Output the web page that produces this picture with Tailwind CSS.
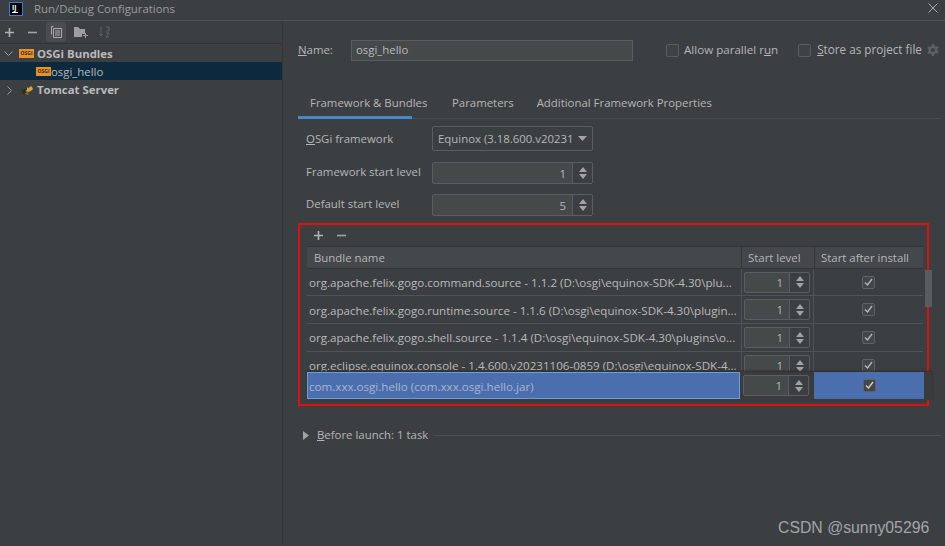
<!DOCTYPE html>
<html lang="en">
<head>
  <meta charset="UTF-8" />
  <title>Run/Debug Configurations</title>
  <script src="https://cdn.jsdelivr.net/npm/@tailwindcss/browser@4"></script>
</head>
<body class="bg-[#3c3f41] text-[#b4b6b8] font-['Open_Sans','Noto_Sans',sans-serif] text-[11.4px] whitespace-nowrap w-[945px] h-[546px] overflow-hidden relative flex flex-col">

  <!-- Title bar -->
  <div class="h-[21px] shrink-0 flex items-center border-b border-[#505354] relative">
    <div class="ml-[9px] -mt-[2px] w-[14px] h-[14px] bg-black border border-[#2f7fd8] text-white text-[7px] font-bold leading-[7px] pl-[2px] pt-[1px]">IJ<div class="w-[6px] h-[1px] bg-white mt-[1px]"></div></div>
    <span class="ml-[11px] -mt-[2px] text-[#9a9c9e]">Run/Debug Configurations</span>
    <svg class="absolute left-[928px] top-[3px]" width="10" height="10" viewBox="0 0 10 10" fill="none" stroke="#a9abad"><path d="M.5.5l9 9M9.5.5l-9 9"/></svg>
  </div>

  <div class="flex flex-1 min-h-0">
    <!-- Left tree -->
    <div class="w-[283px] shrink-0 border-r border-[#343638] flex flex-col">
      <div class="h-[23px] flex items-center border-b border-[#323436] relative">
        <svg class="ml-[4px]" width="11" height="11" viewBox="0 0 11 11" stroke="#b0b2b4" stroke-width="1.6"><path d="M5.5 1v9M1 5.5h9"/></svg>
        <svg class="ml-[12px]" width="11" height="11" viewBox="0 0 11 11" stroke="#a0a2a4" stroke-width="1.6"><path d="M1 5.5h9"/></svg>
        <div class="ml-[8px] w-[20px] h-[20px] bg-[#4a4d4f] rounded-[3px] flex items-center justify-center">
          <svg width="13" height="14" viewBox="0 0 13 14" fill="none" stroke="#a8aaac"><path d="M3.5 1.5H1.5v8M3.5 3.5h8v9h-8zM5 6h5M5 8h5M5 10h5"/></svg>
        </div>
        <svg class="ml-[8px]" width="14" height="13" viewBox="0 0 14 13" fill="#9c9ea0"><path d="M0 1h4l2 2h5v5H8v3H0z"/><path d="M9 9h2V7h1v2h2v1h-2v2h-1v-2H9z"/></svg>
        <svg class="ml-[10px]" width="12" height="12" viewBox="0 0 12 12" fill="none" stroke="#5f6264"><path d="M3 1v9M1 8l2 2 2-2M8 1h3v4H8M8 7h3l-3 4h3"/></svg>
      </div>
      <div class="h-[18px] flex items-center font-bold text-[#b8babc]">
        <svg class="ml-[4px]" width="9" height="9" viewBox="0 0 9 9" fill="none" stroke="#9a9c9e"><path d="M.5 2.5l4 4 4-4"/></svg>
        <span class="ml-[6px] w-[15px] h-[9px] bg-[#e8912a] text-[#3a2a10] text-[5px] leading-[9px] text-center font-bold">OSGi</span>
        <span class="ml-[3px] pt-[2px]">OSGi Bundles</span>
      </div>
      <div class="h-[18px] flex items-center bg-[#0d293e] text-[#b8babc]">
        <span class="ml-[36px] w-[15px] h-[9px] bg-[#e8912a] text-[#3a2a10] text-[5px] leading-[9px] text-center font-bold">OSGi</span>
        <span class="pt-[2px]">osgi_hello</span>
      </div>
      <div class="h-[20px] flex items-center font-bold text-[#b8babc]">
        <svg class="ml-[5px]" width="9" height="9" viewBox="0 0 9 9" fill="none" stroke="#9a9c9e"><path d="M2.5.5l4 4-4 4"/></svg>
        <svg class="ml-[7px]" width="12" height="9" viewBox="0 0 12 9"><path d="M0 3l2 1 2-1 3 1 1 3-2 2H3L2 7z" fill="#26282a"/><path d="M6 1l1 1 2-1 1-1 1 1 1 2-2 2-3 1-3-1 2-1z" fill="#d4a53a"/><path d="M3 8l3-2 2 1-1 2z" fill="#8a6d2c"/></svg>
        <span class="ml-[4px]">Tomcat Server</span>
      </div>
    </div>

    <!-- Right pane -->
    <div class="flex-1 min-w-0 flex flex-col pl-[15px] pr-[4px]">
      <!-- Name row -->
      <div class="flex items-center h-[22px] mt-[18px]">
        <span class="w-[53px] shrink-0"><u>N</u>ame:</span>
        <div class="w-[282px] shrink-0 h-[21px] bg-[#45494a] border border-[#5b5e60] flex items-center pl-[4px] text-[#b8babc]">osgi_hello</div>
        <div class="ml-[33px] w-[13px] h-[13px] shrink-0 border border-[#5a5d5f] bg-[#3f4244] rounded-[2px]"></div>
        <span class="ml-[5px] text-[11.6px]">Allow parallel r<u>u</u>n</span>
        <div class="ml-[20px] w-[13px] h-[13px] shrink-0 border border-[#5a5d5f] bg-[#3f4244] rounded-[2px]"></div>
        <span class="ml-[6px] text-[11.7px]"><u>S</u>tore as project file</span>
        <svg class="ml-[5px] shrink-0" width="12" height="13" viewBox="0 0 12 13" fill="#5e6163"><path d="M5 0h2l.4 1.8 1.6.8 1.7-.7 1 1.7-1.3 1.2v1.9l1.3 1.2-1 1.7-1.7-.7-1.6.8L7 12H5l-.4-1.8-1.6-.8-1.7.7-1-1.7 1.3-1.2V5.3L.3 4.1l1-1.7 1.7.7 1.6-.8zM6 4a2 2 0 100 4 2 2 0 000-4z"/></svg>
      </div>

      <!-- Tabs -->
      <div class="flex h-[38px] mt-[20px] border-b border-[#4a4d4f] items-end">
        <div class="w-[114px] h-[30px] border-b-[3px] border-[#4a88c7] -mb-[1px] pl-[12px] pt-[5px]">Framework &amp; Bundles</div>
        <div class="h-[30px] ml-[40px] -mb-[1px] pt-[5px]">Parameters</div>
        <div class="h-[30px] ml-[23px] -mb-[1px] pt-[5px]">Additional Framework Properties</div>
      </div>

      <!-- Framework form -->
      <div class="flex items-center mt-[7px] pl-[8px] h-[25px]">
        <span class="w-[126px] shrink-0"><u>O</u>SGi framework</span>
        <div class="w-[161px] h-[25px] border border-[#5b5e60] rounded-[2px] flex items-center justify-between pl-[5px] pr-[5px]">
          <span>Equinox (3.18.600.v20231</span>
          <svg width="9" height="5" viewBox="0 0 9 5" fill="#a0a2a4"><path d="M0 0h9L4.5 5z"/></svg>
        </div>
      </div>
      <div class="flex items-center mt-[10px] pl-[8px] h-[23px]">
        <span class="w-[126px] shrink-0 -mt-[2px]">Framework start level</span>
        <div class="w-[161px] h-[22px] border border-[#5b5e60] rounded-[2px] flex bg-[#45494a]">
          <span class="flex-1 text-right pr-[6px] leading-[21px]">1</span>
          <div class="w-[20px] border-l border-[#5b5e60] bg-[#3c3f41] flex flex-col items-center justify-center gap-[2px]">
            <svg width="8" height="5" viewBox="0 0 8 5" fill="#a0a2a4"><path d="M4 0l4 5H0z"/></svg>
            <svg width="8" height="5" viewBox="0 0 8 5" fill="#a0a2a4"><path d="M0 0h8L4 5z"/></svg>
          </div>
        </div>
      </div>
      <div class="flex items-center mt-[9px] pl-[8px] h-[23px]">
        <span class="w-[126px] shrink-0 -mt-[2px]">Default start level</span>
        <div class="w-[161px] h-[22px] border border-[#5b5e60] rounded-[2px] flex bg-[#45494a]">
          <span class="flex-1 text-right pr-[6px] leading-[21px]">5</span>
          <div class="w-[20px] border-l border-[#5b5e60] bg-[#3c3f41] flex flex-col items-center justify-center gap-[2px]">
            <svg width="8" height="5" viewBox="0 0 8 5" fill="#a0a2a4"><path d="M4 0l4 5H0z"/></svg>
            <svg width="8" height="5" viewBox="0 0 8 5" fill="#a0a2a4"><path d="M0 0h8L4 5z"/></svg>
          </div>
        </div>
      </div>

      <!-- Bundle table, framed in red -->
      <div class="w-[631px] h-[183px] mt-[7px] border-[2px] border-[#e01010] pl-[7px] flex flex-col">
        <div class="h-[21px] flex items-center shrink-0">
          <svg class="ml-[6px]" width="11" height="11" viewBox="0 0 11 11" stroke="#b0b2b4" stroke-width="1.6"><path d="M5.5 1v9M1 5.5h9"/></svg>
          <svg class="ml-[12px]" width="11" height="11" viewBox="0 0 11 11" stroke="#a0a2a4" stroke-width="1.6"><path d="M1 5.5h9"/></svg>
        </div>
        <div class="w-[616px] h-[23px] shrink-0 flex bg-[#45484a] border-y border-[#323436] items-center">
          <span class="w-[434px] pl-[7px]">Bundle name</span>
          <span class="w-[73px] pl-[6px] border-l border-[#323436] leading-[22px]">Start level</span>
          <span class="pl-[6px] border-l border-[#323436] leading-[22px]">Start after install</span>
        </div>
        <div class="h-[27px] w-[616px] shrink-0 flex border-b border-[#515456] items-center overflow-hidden">
          <span class="w-[434px] pl-[2px] pt-[2px] text-[11.6px] text-[#b8babc]">org.apache.felix.gogo.command.source - 1.1.2 (D:\osgi\equinox-SDK-4.30\plu...</span>
          <div class="w-[73px] self-stretch border-x border-[#515456] flex items-center pl-[2px]"><div class="w-[66px] h-[21px] border border-[#5b5e60] rounded-[2px] flex bg-[#45494a]"><span class="flex-1 text-right pr-[6px] leading-[20px]">1</span><div class="w-[20px] border-l border-[#5b5e60] bg-[#3c3f41] flex flex-col items-center justify-center gap-[2px]"><svg width="8" height="5" viewBox="0 0 8 5" fill="#a0a2a4"><path d="M4 0l4 5H0z"/></svg><svg width="8" height="5" viewBox="0 0 8 5" fill="#a0a2a4"><path d="M0 0h8L4 5z"/></svg></div></div></div>
          <div class="flex-1 flex justify-center"><div class="w-[13px] h-[13px] border border-[#606365] bg-[#43474a] rounded-[2px] flex items-center justify-center"><svg width="9" height="9" viewBox="0 0 9 9" fill="none" stroke="#b4b6b8" stroke-width="1.4"><path d="M1 4.5l2.5 2.5L8 1"/></svg></div></div>
        </div>
        <div class="h-[28px] w-[616px] shrink-0 flex border-b border-[#515456] items-center overflow-hidden">
          <span class="w-[434px] pl-[2px] pt-[2px] text-[11.6px] text-[#b8babc]">org.apache.felix.gogo.runtime.source - 1.1.6 (D:\osgi\equinox-SDK-4.30\plugin...</span>
          <div class="w-[73px] self-stretch border-x border-[#515456] flex items-center pl-[2px]"><div class="w-[66px] h-[21px] border border-[#5b5e60] rounded-[2px] flex bg-[#45494a]"><span class="flex-1 text-right pr-[6px] leading-[20px]">1</span><div class="w-[20px] border-l border-[#5b5e60] bg-[#3c3f41] flex flex-col items-center justify-center gap-[2px]"><svg width="8" height="5" viewBox="0 0 8 5" fill="#a0a2a4"><path d="M4 0l4 5H0z"/></svg><svg width="8" height="5" viewBox="0 0 8 5" fill="#a0a2a4"><path d="M0 0h8L4 5z"/></svg></div></div></div>
          <div class="flex-1 flex justify-center"><div class="w-[13px] h-[13px] border border-[#606365] bg-[#43474a] rounded-[2px] flex items-center justify-center"><svg width="9" height="9" viewBox="0 0 9 9" fill="none" stroke="#b4b6b8" stroke-width="1.4"><path d="M1 4.5l2.5 2.5L8 1"/></svg></div></div>
        </div>
        <div class="h-[28px] w-[616px] shrink-0 flex border-b border-[#515456] items-center overflow-hidden">
          <span class="w-[434px] pl-[2px] text-[11.6px] text-[#b8babc]">org.apache.felix.gogo.shell.source - 1.1.4 (D:\osgi\equinox-SDK-4.30\plugins\o...</span>
          <div class="w-[73px] self-stretch border-x border-[#515456] flex items-center pl-[2px]"><div class="w-[66px] h-[21px] border border-[#5b5e60] rounded-[2px] flex bg-[#45494a]"><span class="flex-1 text-right pr-[6px] leading-[20px]">1</span><div class="w-[20px] border-l border-[#5b5e60] bg-[#3c3f41] flex flex-col items-center justify-center gap-[2px]"><svg width="8" height="5" viewBox="0 0 8 5" fill="#a0a2a4"><path d="M4 0l4 5H0z"/></svg><svg width="8" height="5" viewBox="0 0 8 5" fill="#a0a2a4"><path d="M0 0h8L4 5z"/></svg></div></div></div>
          <div class="flex-1 flex justify-center"><div class="w-[13px] h-[13px] border border-[#606365] bg-[#43474a] rounded-[2px] flex items-center justify-center"><svg width="9" height="9" viewBox="0 0 9 9" fill="none" stroke="#b4b6b8" stroke-width="1.4"><path d="M1 4.5l2.5 2.5L8 1"/></svg></div></div>
        </div>
        <div class="h-[20px] w-[616px] shrink-0 flex items-start overflow-hidden">
          <span class="w-[434px] pl-[2px] pt-[5px] text-[11.6px] text-[#b8babc]">org.eclipse.equinox.console - 1.4.600.v20231106-0859 (D:\osgi\equinox-SDK-4...</span>
          <div class="w-[73px] self-stretch border-x border-[#515456] pl-[2px] pt-[3px]"><div class="w-[66px] h-[21px] border border-[#5b5e60] rounded-[2px] flex bg-[#45494a]"><span class="flex-1 text-right pr-[6px] leading-[20px]">1</span><div class="w-[20px] border-l border-[#5b5e60] bg-[#3c3f41] flex flex-col items-center justify-center gap-[2px]"><svg width="8" height="5" viewBox="0 0 8 5" fill="#a0a2a4"><path d="M4 0l4 5H0z"/></svg><svg width="8" height="5" viewBox="0 0 8 5" fill="#a0a2a4"><path d="M0 0h8L4 5z"/></svg></div></div></div>
          <div class="flex-1 flex justify-center pt-[7px]"><div class="w-[13px] h-[13px] border border-[#606365] bg-[#43474a] rounded-[2px] flex items-center justify-center"><svg width="9" height="9" viewBox="0 0 9 9" fill="none" stroke="#b4b6b8" stroke-width="1.4"><path d="M1 4.5l2.5 2.5L8 1"/></svg></div></div>
        </div>
        <!-- Row being dragged -->
        <div class="h-[28px] w-[625px] shrink-0 flex items-start bg-[#393b3d] shadow-[0_-1px_2px_#2b2b2b] z-10">
          <div class="w-[433px] h-[27px] bg-[#4b6eaf] border border-[#6a9fd8] pl-[1px] pt-[2px] flex items-center text-[11.6px] text-[#a8b6cc]">com.xxx.osgi.hello (com.xxx.osgi.hello.jar)</div>
          <div class="w-[74px] h-[27px] flex items-center pl-[3px]"><div class="w-[66px] h-[21px] border border-[#5b5e60] rounded-[2px] flex bg-[#45494a]"><span class="flex-1 text-right pr-[6px] leading-[20px]">1</span><div class="w-[20px] border-l border-[#5b5e60] bg-[#3c3f41] flex flex-col items-center justify-center gap-[2px]"><svg width="8" height="5" viewBox="0 0 8 5" fill="#a0a2a4"><path d="M4 0l4 5H0z"/></svg><svg width="8" height="5" viewBox="0 0 8 5" fill="#a0a2a4"><path d="M0 0h8L4 5z"/></svg></div></div></div>
          <div class="w-[110px] h-[27px] bg-[#4b6eaf] flex items-center justify-center"><div class="w-[13px] h-[13px] border border-[#606365] bg-[#43474a] rounded-[2px] flex items-center justify-center"><svg width="9" height="9" viewBox="0 0 9 9" fill="none" stroke="#d0d2d4" stroke-width="1.4"><path d="M1 4.5l2.5 2.5L8 1"/></svg></div></div>
        </div>
      </div>

      <!-- Before launch -->
      <div class="flex items-center mt-[20px] h-[18px] pl-[5px]">
        <svg width="6" height="9" viewBox="0 0 6 9" fill="#a0a2a4"><path d="M0 0l6 4.5L0 9z"/></svg>
        <span class="ml-[8px]"><u>B</u>efore launch: 1 task</span>
        <div class="ml-[6px] w-[507px] h-px bg-[#4d5052]"></div>
      </div>
    </div>
  </div>

  <!-- Scrollbar thumb over the table edge -->
  <div class="absolute left-[925px] top-[270px] w-[7px] h-[37px] bg-[#5a5d5f]"></div>
  <!-- Watermark -->
  <div class="absolute left-[778px] top-[519px] font-['Liberation_Sans',sans-serif] text-[15.8px] leading-[18px] text-[#a3a5a7]">CSDN @sunny05296</div>
</body>
</html>
